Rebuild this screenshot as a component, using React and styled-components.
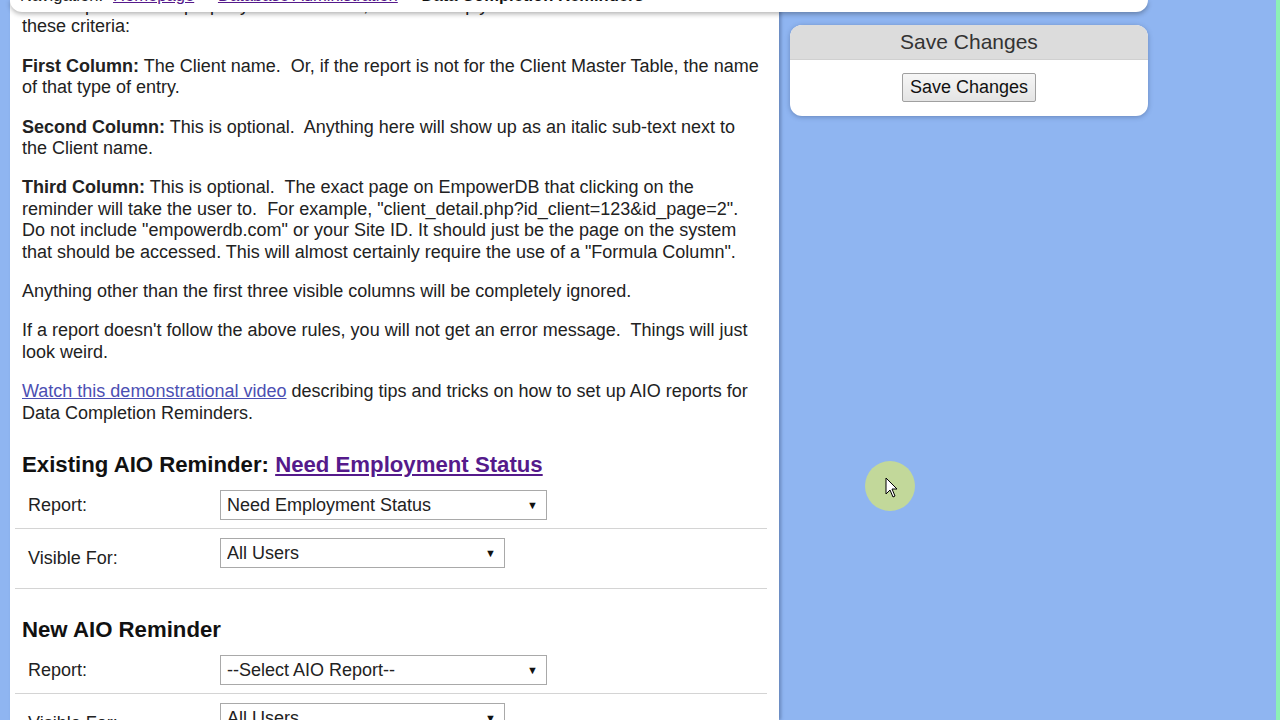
import React from "react";
import styled, { createGlobalStyle } from "styled-components";

const GlobalStyle = createGlobalStyle`
  html, body {
    margin: 0;
    padding: 0;
    height: 100%;
    overflow: hidden;
    background: #8fb5f1;
    font-family: "Liberation Sans", Arial, sans-serif;
    color: #222;
  }
`;

const Page = styled.div`
  position: relative;
  display: grid;
  grid-template-columns: 10px 769px 1fr 4px;
  height: 720px;
  overflow: hidden;
`;

const Gutter = styled.div`
  background: #8fb5f1;
`;

const EdgeStrip = styled.div`
  background: #8cf0b6;
`;

const Main = styled.main`
  background: #fff;
  box-shadow: 2px 0 3px rgba(30, 50, 90, 0.35);
  overflow: hidden;
  padding: 0 15px 0 12px;
  z-index: 1;
`;

const Scrolled = styled.div`
  margin-top: -5px;
`;

const Para = styled.p`
  margin: 0 0 18px;
  font-size: 18px;
  line-height: 21.4px;
  color: #222;
`;

const Link = styled.a`
  color: ${(p) => (p.$visited ? "#551a8b" : "#4c4fb3")};
  text-decoration: underline;
  cursor: pointer;
`;

const Heading = styled.h2`
  margin: ${(p) => p.$top}px 0 9px;
  font-size: 22.2px;
  line-height: 24px;
  font-weight: bold;
  color: #111;
`;

const Form = styled.div`
  margin: 0 -3px 0 -7px;
`;

const Row = styled.div`
  display: grid;
  grid-template-columns: 205px 1fr;
  align-items: start;
  padding: ${(p) => p.$pad};
  border-bottom: 1px solid #d4d4d4;
`;

const Label = styled.div`
  padding-left: 13px;
  margin-top: ${(p) => p.$offset || 0}px;
  font-size: 18px;
  line-height: 30px;
  color: #222;
`;

const SelectBox = styled.div`
  display: flex;
  align-items: center;
  width: ${(p) => p.$width}px;
  height: 30px;
  box-sizing: border-box;
  border: 1px solid #a9a9a9;
  background: #fff;
`;

const Select = styled.select`
  flex: 1;
  appearance: none;
  border: 0;
  outline: none;
  background: transparent;
  height: 28px;
  padding: 0 0 0 6px;
  font-family: "Liberation Sans", Arial, sans-serif;
  font-size: 18px;
  color: #222;
`;

const Arrow = styled.span`
  font-size: 11px;
  color: #111;
  padding-right: 8px;
`;

const Side = styled.aside`
  padding: 25px 0 0 11px;
`;

const Card = styled.section`
  width: 358px;
  border-radius: 12px;
  background: #fff;
  overflow: hidden;
  box-shadow: 0 1px 5px rgba(30, 50, 90, 0.35);
`;

const CardHeader = styled.div`
  height: 34px;
  background: #dcdcdc;
  border-bottom: 1px solid #d0d0d0;
  display: flex;
  align-items: center;
  justify-content: center;
  font-size: 21px;
  color: #333;
`;

const CardBody = styled.div`
  display: flex;
  justify-content: center;
  padding: 13px 0 14px;
`;

const Button = styled.button`
  height: 29px;
  padding: 0 7px;
  border: 1px solid #a0a0a0;
  border-radius: 2px;
  background: linear-gradient(#f6f6f6, #e4e4e4);
  font-family: "Liberation Sans", Arial, sans-serif;
  font-size: 18px;
  color: #111;
`;

const NavBar = styled.nav`
  position: absolute;
  top: 0;
  left: 10px;
  width: 1138px;
  height: 12px;
  overflow: hidden;
  background: #fff;
  border-radius: 0 0 12px 12px;
  box-shadow: 0 2px 5px rgba(0, 0, 0, 0.3);
  z-index: 5;
`;

const NavLine = styled.div`
  margin-top: -15px;
  padding-left: 10px;
  font-size: 16.6px;
  line-height: 21px;
  color: #222;
  white-space: nowrap;
`;

const NavLabel = styled.span`
  margin-right: 10px;
`;

const Crumb = styled.span`
  color: #777;
  margin: 0 7px;
`;

const Current = styled.b`
  color: #111;
`;

const Highlight = styled.div`
  position: absolute;
  left: 865px;
  top: 461px;
  width: 50px;
  height: 50px;
  border-radius: 50%;
  background: rgba(214, 230, 120, 0.72);
  z-index: 10;
`;

const Pointer = styled.svg`
  position: absolute;
  left: 885px;
  top: 477px;
  z-index: 11;
`;

const sp = "\u00a0 ";

function FormRow({ label, value, width, pad, offset }) {
  return (
    <Row $pad={pad}>
      <Label $offset={offset}>{label}</Label>
      <SelectBox $width={width}>
        <Select defaultValue={value}>
          <option>{value}</option>
        </Select>
        <Arrow>▼</Arrow>
      </SelectBox>
    </Row>
  );
}

export default function App() {
  return (
    <>
      <GlobalStyle />
      <Page>
        <Gutter />
        <Main>
          <Scrolled>
            <Para>
              For a report to work properly as a reminder, it must comply with
              <br />
              these criteria:
            </Para>
            <Para>
              <b>First Column:</b> The Client name.{sp}Or, if the report is not for the Client Master Table, the name
              of that type of entry.
            </Para>
            <Para>
              <b>Second Column:</b> This is optional.{sp}Anything here will show up as an italic sub-text next to
              the Client name.
            </Para>
            <Para>
              <b>Third Column:</b> This is optional.{sp}The exact page on EmpowerDB that clicking on the
              reminder will take the user to.{sp}For example, "client_detail.php?id_client=123&amp;id_page=2".
              Do not include "empowerdb.com" or your Site ID. It should just be the page on the system
              that should be accessed. This will almost certainly require the use of a "Formula Column".
            </Para>
            <Para>Anything other than the first three visible columns will be completely ignored.</Para>
            <Para>
              If a report doesn't follow the above rules, you will not get an error message.{sp}Things will just
              look weird.
            </Para>
            <Para>
              <Link>Watch this demonstrational video</Link> describing tips and tricks on how to set up AIO reports for
              Data Completion Reminders.
            </Para>

            <Heading $top={29}>
              Existing AIO Reminder: <Link $visited>Need Employment Status</Link>
            </Heading>
            <Form>
              <FormRow label="Report:" value="Need Employment Status" width={327} pad="4px 0 8px" />
              <FormRow label="Visible For:" value="All Users" width={285} pad="9px 0 15px" offset={5} />
            </Form>

            <Heading $top={29}>New AIO Reminder</Heading>
            <Form>
              <FormRow label="Report:" value="--Select AIO Report--" width={327} pad="4px 0 8px" />
              <FormRow label="Visible For:" value="All Users" width={285} pad="9px 0 15px" offset={5} />
            </Form>
          </Scrolled>
        </Main>
        <Side>
          <Card>
            <CardHeader>Save Changes</CardHeader>
            <CardBody>
              <Button>Save Changes</Button>
            </CardBody>
          </Card>
        </Side>
        <EdgeStrip />

        <NavBar>
          <NavLine>
            <NavLabel>Navigation:</NavLabel>
            <Link $visited>Homepage</Link>
            <Crumb>&gt;</Crumb>
            <Link $visited>Database Administration</Link>
            <Crumb>&gt;</Crumb>
            <Current>Data Completion Reminders</Current>
          </NavLine>
        </NavBar>

        <Highlight />
        <Pointer width="14" height="22" viewBox="0 0 14 22">
          <path d="M1 1 L1 17 L5 13 L8 20 L10 19 L7 12 L12 12 Z" fill="#fff" stroke="#000" strokeWidth="1" />
        </Pointer>
      </Page>
    </>
  );
}
